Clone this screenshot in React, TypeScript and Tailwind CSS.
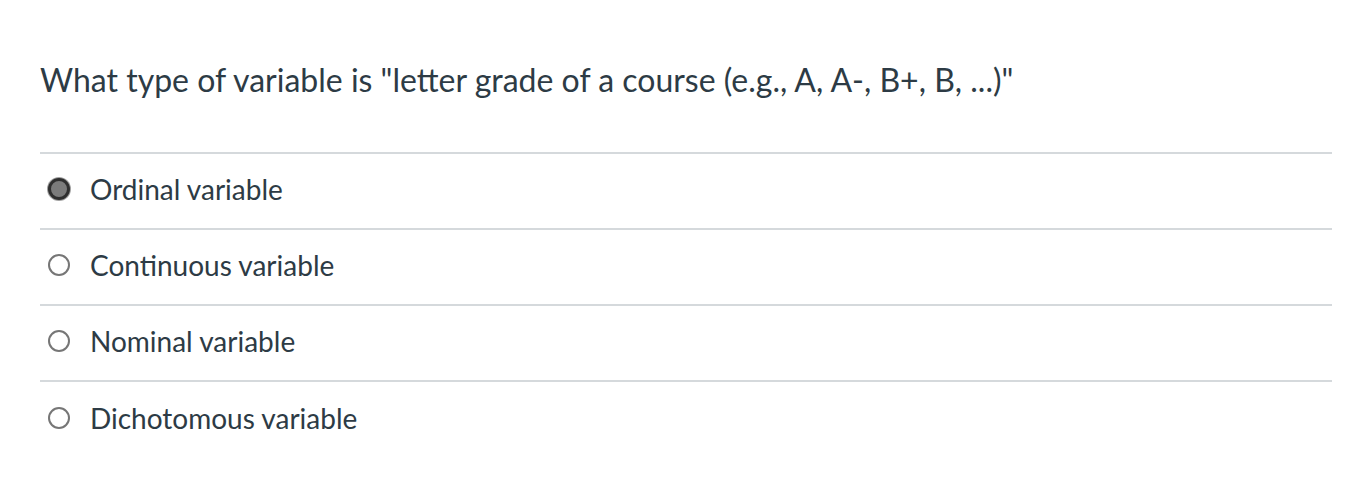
import React from "react";

const options = [
  { label: "Ordinal variable", selected: true },
  { label: "Continuous variable", selected: false },
  { label: "Nominal variable", selected: false },
  { label: "Dichotomous variable", selected: false },
];

function Radio({ selected }: { selected: boolean }) {
  if (selected) {
    return (
      <span className="flex h-[24px] w-[24px] shrink-0 items-center justify-center rounded-full bg-[#a0a0a0]">
        <span className="h-[22px] w-[22px] rounded-full border-[3px] border-[#2f2f2f] bg-[#7b7b7b]" />
      </span>
    );
  }
  return (
    <span className="flex h-[24px] w-[24px] shrink-0 items-center justify-center">
      <span className="h-[22px] w-[22px] rounded-full border-[2px] border-[#767676] bg-white" />
    </span>
  );
}

export default function App() {
  return (
    <div
      className="h-[496px] w-[1370px] bg-white pl-[40px] pr-[38px] pt-[60px] text-[#2d3b45]"
      style={{ fontFamily: "Lato, 'Noto Sans', sans-serif" }}
    >
      <div className="text-[32px] leading-[40px]">
        What type of variable is "letter grade of a course (e.g., A, A-, B+, B, ...)"
      </div>
      <div className="mt-[52px] border-t-2 border-[#d5d9dc]">
        {options.map((o, i) => (
          <div
            key={o.label}
            className={`flex h-[76px] items-center gap-[19px] pb-[4px] pl-[7px] ${
              i < options.length - 1 ? "border-b-2 border-[#d5d9dc]" : ""
            }`}
          >
            <Radio selected={o.selected} />
            <span className="text-[28px] leading-[30px]">{o.label}</span>
          </div>
        ))}
      </div>
    </div>
  );
}
